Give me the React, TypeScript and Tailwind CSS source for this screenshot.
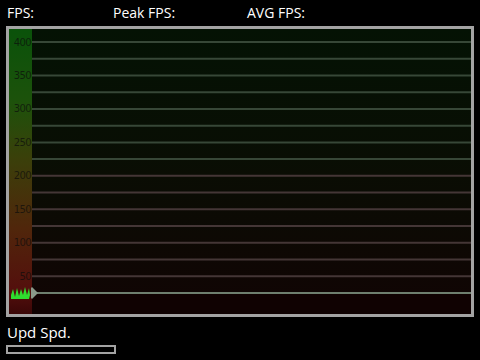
import React from "react";

const labels = [400, 350, 300, 250, 200, 150, 100, 50];

export default function App() {
  const top = 13;
  const step = 16.73;
  const lines = Array.from({ length: 16 }, (_, i) => top + i * step);
  return (
    <div className="w-[480px] h-[360px] bg-black text-white relative overflow-hidden" style={{ fontFamily: '"Open Sans", "DejaVu Sans", sans-serif' }}>
      <div className="h-[26px] flex items-center text-[14px] leading-none">
        <span className="ml-[7px] w-[106px]">FPS:</span>
        <span className="w-[134px]">Peak FPS:</span>
        <span>AVG FPS:</span>
      </div>
      <div className="ml-[6px] w-[468px] h-[291px] border-[3px] border-[#a3a3a3] flex">
        <div className="w-[23px] h-full relative bg-[linear-gradient(to_bottom,#0a520a_0%,#1c520b_25%,#3a400a_45%,#50260b_70%,#540f0d_92%,#3a0707_100%)]">
          <svg width="23" height="285" className="absolute inset-0">
            {labels.map((l, i) => (
              <text key={l} x="22" y={top + i * 2 * step + 3.5} textAnchor="end" fontSize="10" fill="#0c0c0c" fillOpacity="0.7" fontFamily='"DejaVu Sans", sans-serif' letterSpacing="-0.6">
                {l}
              </text>
            ))}
            <polygon points="22,258 28,264 22,270" fill="#8a9a8a" />
            <path d="M2,266 L4,260 L6,268 L8,259 L10,267 L12,260 L14,266 L16,258 L18,266 L20,259 L21,266 L20,270 L2,270 Z" fill="#2fdc2f" />
          </svg>
        </div>
        <div className="flex-1 h-full relative bg-[linear-gradient(to_bottom,#041204_0%,#090e04_45%,#110404_100%)]">
          <svg width="439" height="285" className="absolute inset-0">
            <rect x="0" y={lines[15]} width="439" height={285 - lines[15]} fill="#100202" />
            {lines.map((y, i) => (
              <line key={i} x1="0" x2="439" y1={y} y2={y} stroke={i === 15 ? "#6f7f6f" : i < 8 ? "#374737" : "#443636"} strokeWidth="2" />
            ))}
            <polygon points="0,258 6,264 0,270" fill="#8a9a8a" />
          </svg>
        </div>
      </div>
      <div className="ml-[7px] mt-[6px] text-[15px] leading-[18px]">Upd Spd.</div>
      <div className="ml-[6px] mt-[4px] w-[110px] h-[9px] border-2 border-[#a3a3a3] bg-black" />
    </div>
  );
}
